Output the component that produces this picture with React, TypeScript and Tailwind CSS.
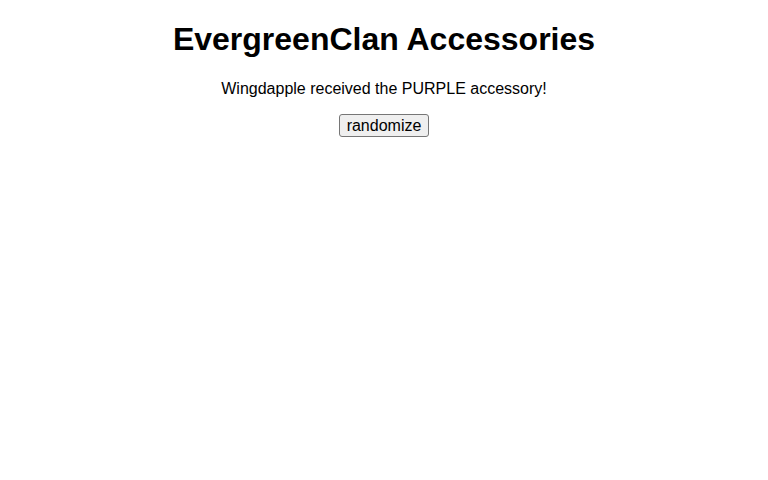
import { useState } from "react";

const colors = ["PURPLE", "RED", "BLUE", "GREEN", "ORANGE", "YELLOW"];
const cats = ["Wingdapple", "Mossfern", "Cedarpaw", "Thornclaw"];

export default function App() {
  const [pick, setPick] = useState({ cat: "Wingdapple", color: "PURPLE" });

  const randomize = () => {
    setPick({
      cat: cats[Math.floor(Math.random() * cats.length)],
      color: colors[Math.floor(Math.random() * colors.length)],
    });
  };

  return (
    <div className="flex flex-col items-center bg-white text-black font-['Liberation_Sans',Arial,sans-serif]">
      <h1 className="mt-[21px] text-[32px] font-bold leading-[37px]">EvergreenClan Accessories</h1>
      <p className="mt-[22px] text-base leading-[18px]">
        {pick.cat} received the {pick.color} accessory!
      </p>
      <button
        onClick={randomize}
        className="mt-4 h-[23px] rounded-[3px] border border-[#767676] bg-[#efefef] px-[7px] text-base leading-[19px] text-black hover:bg-[#e5e5e5]"
      >
        randomize
      </button>
    </div>
  );
}
